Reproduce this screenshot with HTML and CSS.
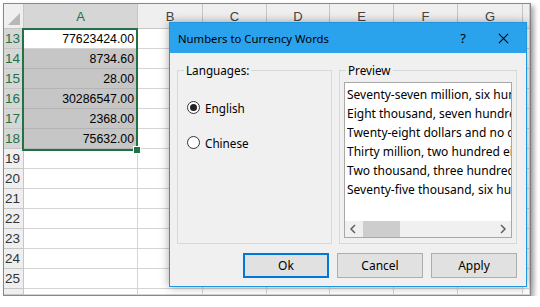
FILE: index.html
```html
<!DOCTYPE html>
<html lang="en">
<head>
    <meta charset="UTF-8">
    <meta name="viewport" content="width=device-width, initial-scale=1.0">
    <title>Numbers to Currency Words</title>
    <link rel="stylesheet" href="styles.css">
</head>
<body>
    <div class="sheet">
        <div class="grid">
            <div class="hd corner"><span class="tri"></span></div>
            <div class="hd col sel">A</div>
            <div class="hd col">B</div>
            <div class="hd col">C</div>
            <div class="hd col">D</div>
            <div class="hd col">E</div>
            <div class="hd col">F</div>
            <div class="hd col">G</div>
            <div class="hd col"></div>

            <div class="hd row sel">13</div><div class="c num">77623424.00</div><div class="c"></div><div class="c"></div><div class="c"></div><div class="c"></div><div class="c"></div><div class="c"></div><div class="c"></div>
            <div class="hd row sel">14</div><div class="c num on">8734.60</div><div class="c"></div><div class="c"></div><div class="c"></div><div class="c"></div><div class="c"></div><div class="c"></div><div class="c"></div>
            <div class="hd row sel">15</div><div class="c num on">28.00</div><div class="c"></div><div class="c"></div><div class="c"></div><div class="c"></div><div class="c"></div><div class="c"></div><div class="c"></div>
            <div class="hd row sel">16</div><div class="c num on">30286547.00</div><div class="c"></div><div class="c"></div><div class="c"></div><div class="c"></div><div class="c"></div><div class="c"></div><div class="c"></div>
            <div class="hd row sel">17</div><div class="c num on">2368.00</div><div class="c"></div><div class="c"></div><div class="c"></div><div class="c"></div><div class="c"></div><div class="c"></div><div class="c"></div>
            <div class="hd row sel">18</div><div class="c num on">75632.00</div><div class="c"></div><div class="c"></div><div class="c"></div><div class="c"></div><div class="c"></div><div class="c"></div><div class="c"></div>
            <div class="hd row">19</div><div class="c"></div><div class="c"></div><div class="c"></div><div class="c"></div><div class="c"></div><div class="c"></div><div class="c"></div><div class="c"></div>
            <div class="hd row">20</div><div class="c"></div><div class="c"></div><div class="c"></div><div class="c"></div><div class="c"></div><div class="c"></div><div class="c"></div><div class="c"></div>
            <div class="hd row">21</div><div class="c"></div><div class="c"></div><div class="c"></div><div class="c"></div><div class="c"></div><div class="c"></div><div class="c"></div><div class="c"></div>
            <div class="hd row">22</div><div class="c"></div><div class="c"></div><div class="c"></div><div class="c"></div><div class="c"></div><div class="c"></div><div class="c"></div><div class="c"></div>
            <div class="hd row">23</div><div class="c"></div><div class="c"></div><div class="c"></div><div class="c"></div><div class="c"></div><div class="c"></div><div class="c"></div><div class="c"></div>
            <div class="hd row">24</div><div class="c"></div><div class="c"></div><div class="c"></div><div class="c"></div><div class="c"></div><div class="c"></div><div class="c"></div><div class="c"></div>
            <div class="hd row">25</div><div class="c"></div><div class="c"></div><div class="c"></div><div class="c"></div><div class="c"></div><div class="c"></div><div class="c"></div><div class="c"></div>
            <div class="hd row"></div><div class="c"></div><div class="c"></div><div class="c"></div><div class="c"></div><div class="c"></div><div class="c"></div><div class="c"></div><div class="c"></div>
        </div>

        <div class="selection"><span class="handle"></span></div>

        <div class="dialog">
            <div class="titlebar">
                <span class="title">Numbers to Currency Words</span>
                <span class="help">?</span>
                <svg class="close" viewBox="0 0 12 12" fill="none" stroke="#000" stroke-width="1.1">
                    <path d="M1 1L11 11M11 1L1 11"/>
                </svg>
            </div>
            <div class="dialog-body">
                <div class="panels">
                    <fieldset class="group languages">
                        <legend>Languages:</legend>
                        <div class="radios">
                            <label class="radio"><span class="dot checked"></span>English</label>
                            <label class="radio"><span class="dot"></span>Chinese</label>
                        </div>
                    </fieldset>
                    <fieldset class="group preview">
                        <legend>Preview</legend>
                        <div class="listbox">
                            <div class="lines">
                                <div>Seventy-seven million, six hundred</div>
                                <div>Eight thousand, seven hundred</div>
                                <div>Twenty-eight dollars and no cents</div>
                                <div>Thirty million, two hundred eighty</div>
                                <div>Two thousand, three hundred</div>
                                <div>Seventy-five thousand, six hundred</div>
                            </div>
                            <div class="hscroll">
                                <svg class="arrow" viewBox="0 0 8 10" fill="none" stroke="#606060" stroke-width="1.5"><path d="M6 1L2 5L6 9"/></svg>
                                <div class="track"><div class="thumb"></div></div>
                                <svg class="arrow" viewBox="0 0 8 10" fill="none" stroke="#606060" stroke-width="1.5"><path d="M2 1L6 5L2 9"/></svg>
                            </div>
                        </div>
                    </fieldset>
                </div>
                <div class="buttons">
                    <button class="btn default">Ok</button>
                    <button class="btn">Cancel</button>
                    <button class="btn">Apply</button>
                </div>
            </div>
        </div>
    </div>
</body>
</html>
```

FILE: styles.css
```css
body {
    margin: 0;
    background: #ffffff;
    font-family: "Noto Sans", "Liberation Sans", sans-serif;
}
.sheet {
    position: relative;
    width: 528px;
    height: 293px;
    margin: 3px 0 0 3px;
    box-sizing: border-box;
    border: 1px solid #8a8a8a;
    box-shadow: 3px 3px 5px rgba(0,0,0,0.35);
    background: white;
}
.grid {
    display: grid;
    grid-template-columns: 20px 114px 65px 64px 63px 64px 64px 65px 1fr;
    grid-template-rows: 25px repeat(13, 20px) 1fr;
    height: 100%;
    overflow: hidden;
    font-family: "Liberation Sans", sans-serif;
}
.grid > div {
    box-sizing: border-box;
    border-right: 1px solid #d4d4d4;
    border-bottom: 1px solid #d4d4d4;
    overflow: hidden;
}
.hd {
    background: #efefef;
    color: #444;
    font-size: 13px;
    display: flex;
    align-items: center;
}
.grid > .hd {
    border-color: #c6c6c6;
}
.hd.col {
    justify-content: center;
}
.hd.row {
    padding-left: 1px;
    font-size: 13.5px;
    color: #333;
}
.hd.sel {
    background: #d6d6d6;
    color: #217346;
}
.corner {
    position: relative;
}
.tri {
    position: absolute;
    right: 3px;
    bottom: 3px;
    width: 0;
    height: 0;
    border-left: 12px solid transparent;
    border-bottom: 12px solid #b8b8b8;
}
.c.num {
    font-size: 12.3px;
    color: #000;
    text-align: right;
    padding-right: 3px;
    line-height: 20px;
}
.c.on {
    background: #c6c6c6;
    border-bottom-color: #b4b4b4;
}
.selection {
    position: absolute;
    left: 18px;
    top: 24px;
    width: 116px;
    height: 123px;
    box-sizing: border-box;
    border: 2px solid #217346;
}
.handle {
    position: absolute;
    right: -5px;
    bottom: -5px;
    width: 6px;
    height: 6px;
    background: #217346;
    border: 1px solid white;
}

/* dialog */
.dialog {
    position: absolute;
    left: 165px;
    top: 18px;
    width: 358px;
    height: 265px;
    box-sizing: border-box;
    border: 1px solid #1e96e0;
    background: #f0f0f0;
    box-shadow: 0 0 9px rgba(0,0,0,0.35);
    display: flex;
    flex-direction: column;
    font-size: 11.7px;
    color: #000;
}
.titlebar {
    height: 30px;
    background: #2aa2ec;
    display: flex;
    align-items: center;
    padding-left: 8px;
    flex-shrink: 0;
}
.title {
    flex: 1;
    font-size: 11.3px;
}
.help {
    font-size: 13px;
    width: 20px;
    text-align: center;
    margin-right: 25px;
}
.close {
    width: 11px;
    height: 11px;
    margin-right: 17px;
}
.dialog-body {
    flex: 1;
    padding: 10px 9px 8px 7px;
    display: flex;
    flex-direction: column;
}
.panels {
    display: flex;
    gap: 7px;
    height: 181px;
}
.group {
    margin: 0;
    padding: 0;
    min-width: 0;
    flex-shrink: 0;
    border: 1px solid #d8d8d8;
    box-sizing: border-box;
    height: 181px;
}
.group legend {
    margin-left: 6px;
    padding: 0 2px;
    line-height: 15px;
}
.languages {
    width: 155px;
}
.radios {
    padding: 20px 0 0 9px;
    display: flex;
    flex-direction: column;
    gap: 16px;
}
.radio {
    display: flex;
    align-items: center;
    gap: 5px;
    height: 19px;
}
.dot {
    width: 13px;
    height: 13px;
    box-sizing: border-box;
    border: 1px solid #333;
    border-radius: 50%;
    background: white;
    display: flex;
    align-items: center;
    justify-content: center;
}
.dot.checked::after {
    content: "";
    width: 7px;
    height: 7px;
    border-radius: 50%;
    background: #222;
}
.preview {
    width: 178px;
}
.listbox {
    height: 156px;
    margin: 4px 4px 0 4px;
    box-sizing: border-box;
    border: 1px solid #a8a8a8;
    background: white;
    display: flex;
    flex-direction: column;
}
.lines {
    flex: 1;
    overflow: hidden;
    white-space: nowrap;
    padding: 2px 0 0 2px;
    line-height: 19px;
    font-size: 12px;
}
.hscroll {
    height: 16px;
    background: #f0f0f0;
    display: flex;
    align-items: center;
}
.arrow {
    width: 8px;
    height: 10px;
    padding: 0 4px;
}
.track {
    flex: 1;
    height: 100%;
}
.thumb {
    width: 37px;
    height: 100%;
    margin-left: 2px;
    background: #cdcdcd;
}
.buttons {
    display: flex;
    justify-content: flex-end;
    gap: 8px;
    margin-top: 9px;
}
.btn {
    width: 86px;
    height: 25px;
    box-sizing: border-box;
    background: #e1e1e1;
    border: 1px solid #adadad;
    font-family: inherit;
    font-size: 12px;
    color: #000;
    padding: 0;
}
.btn.default {
    border: 2px solid #0078d7;
}
```
